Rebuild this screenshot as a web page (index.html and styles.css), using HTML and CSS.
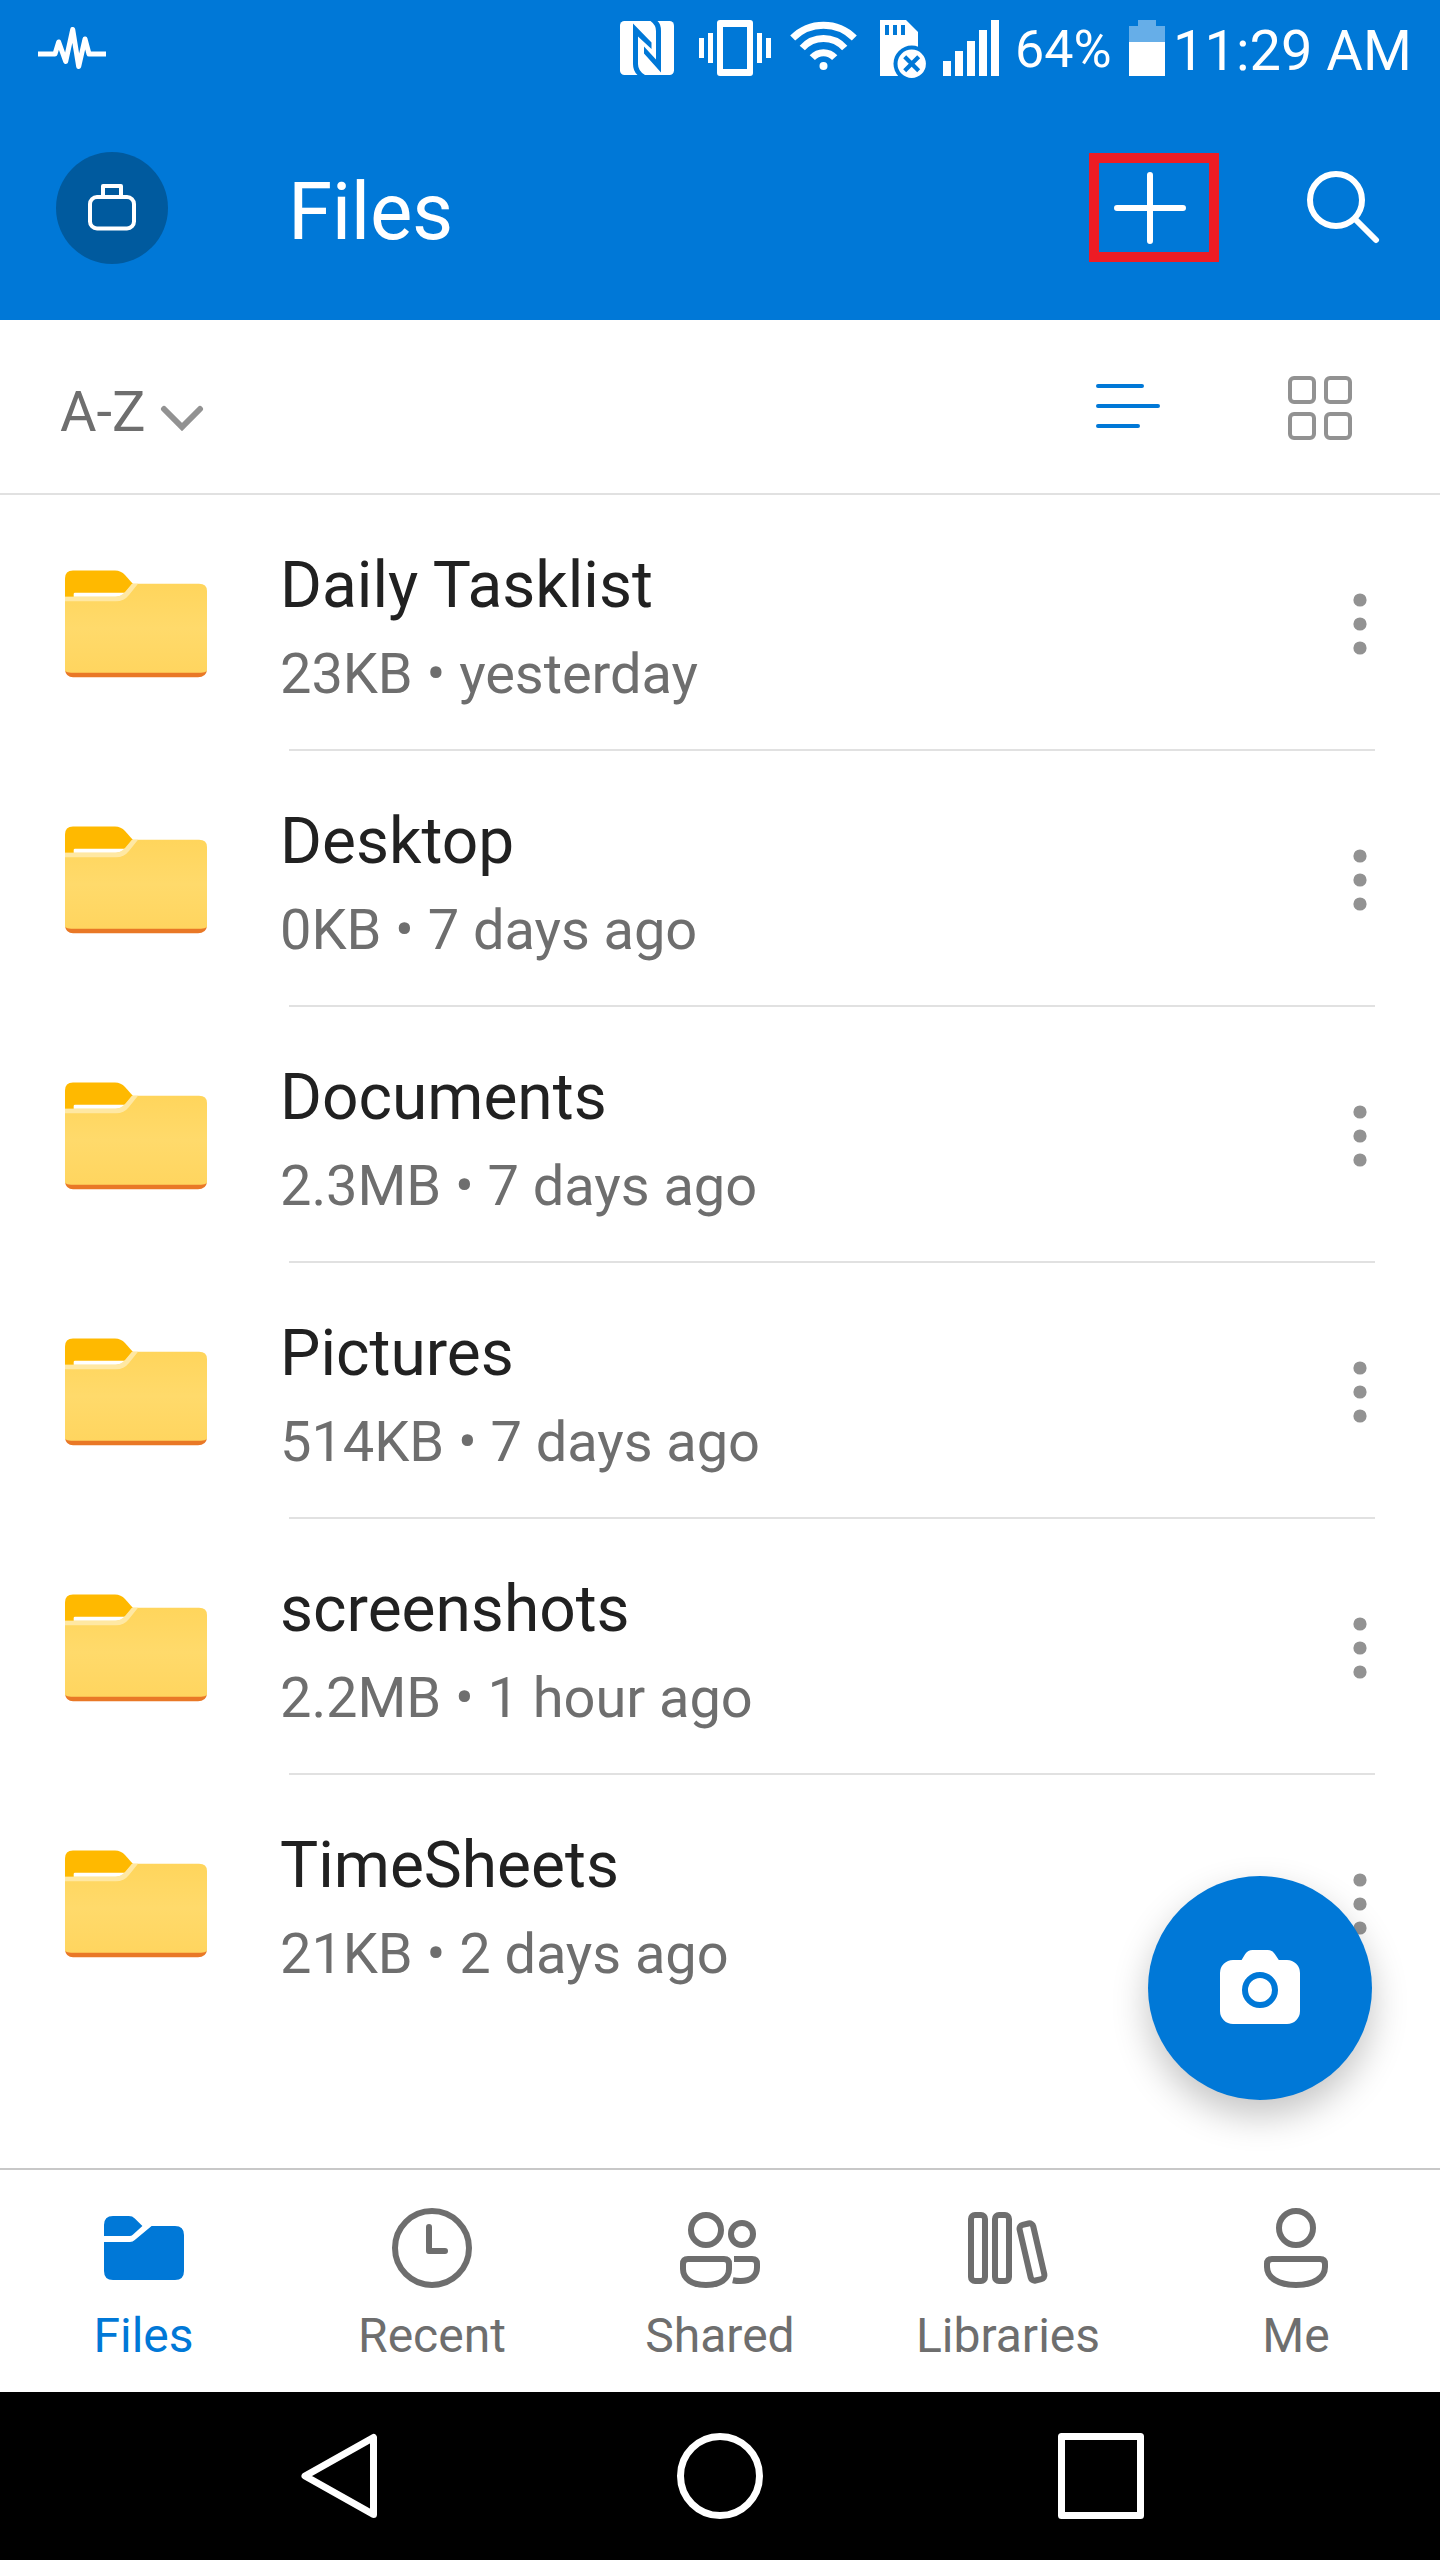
FILE: index.html
```html
<!DOCTYPE html>
<html lang="en">
<head>
    <meta charset="UTF-8">
    <meta name="viewport" content="width=device-width, initial-scale=1.0">
    <title>Files</title>
    <link rel="stylesheet" href="styles.css">
</head>
<body>

<!-- Shared icons -->
<svg class="sprite" width="0" height="0">
    <defs>
        <linearGradient id="folder-fill" x1="0" y1="0" x2="0" y2="1">
            <stop offset="0" stop-color="#ffd55c"/>
            <stop offset="0.5" stop-color="#ffda6b"/>
            <stop offset="1" stop-color="#ffd55f"/>
        </linearGradient>
    </defs>
    <symbol id="folder" viewBox="0 0 142 108">
        <path fill="#ffb900" d="M0 30V8.500Q0 .5 8 .5H50Q56 .5 60 5L68 14L60 30Z"/>
        <path fill="#fff" d="M8.700 28V24Q8.700 22.700 10 22.700H62L54 28Z"/>
        <path fill="#e97826" d="M0 98H142V100Q141 107.300 133 107.300H8Q1 107.300 0 100Z"/>
        <path fill="url(#folder-fill)" d="M0 26.700H51Q57 26.700 61 21.500L67 13.700H134Q142 13.700 142 21V101Q140 102.700 136 102.700H6Q2 102.700 0 101Z"/>
        <path fill="#ffe8a3" d="M0 26.700H50Q56 26.700 60 22L67 13.700H73L64 25Q59 31.300 51 31.300H0Z"/>
    </symbol>
    <symbol id="more" viewBox="0 0 14 62">
        <circle cx="7" cy="7" r="6.600"/>
        <circle cx="7" cy="31" r="6.600"/>
        <circle cx="7" cy="55" r="6.600"/>
    </symbol>
</svg>

<div class="phone">

    <!-- Header -->
    <header class="header">
        <div class="status-bar">
            <svg class="pulse" width="68" height="44" viewBox="0 0 68 44">
                <path d="M0 27H17L20.700 15L27.700 34.500L34.700 2.500L40.700 39.500L47 12L51 27H68"/>
            </svg>
            <svg class="nfc" width="54" height="54" viewBox="0 0 54 54">
                <rect width="54" height="54" rx="4.500" fill="#fff"/>
                <path fill="#0078d7" d="M13 2.500L31.500 21.500V28L18 15.500V43Q18 50 25 54H17.500Q13 50 13 43ZM41 51.500L24 32.500V25.500L36 38.500V10Q36 4 30.500 0H37.500Q41 3 41 10Z"/>
            </svg>
            <svg class="vibrate" width="72" height="56" viewBox="0 0 72 56" fill="#fff">
                <path fill-rule="evenodd" d="M21 0H51Q54 0 54 3V53Q54 56 51 56H21Q18 56 18 53V3Q18 0 21 0ZM24 7V49H48V7Z"/>
                <path d="M0 18H5V38H0ZM9 13H14V43H9ZM58 13H63V43H58ZM67 18H72V38H67Z"/>
            </svg>
            <svg class="wifi" width="67" height="56" viewBox="0 0 67 56">
                <path d="M2.700 18A43.400 43.400 0 0 1 64.300 18M12.300 28A28.300 28.300 0 0 1 54.700 28M22.300 37.700A15 15 0 0 1 44.700 37.700"/>
                <circle cx="33.500" cy="46" r="4"/>
            </svg>
            <svg class="sd-card" width="46" height="58" viewBox="0 0 46 58">
                <path fill="#fff" d="M0 0H26L38 12V56H0Z"/>
                <path fill="#0078d7" d="M5 5H9V15H5ZM13 5H17V15H13ZM21 5H25V15H21Z"/>
                <circle cx="31.700" cy="43.800" r="18.200" fill="#0078d7"/>
                <circle cx="31.700" cy="43.800" r="14.200" fill="#fff"/>
                <path stroke="#0078d7" stroke-width="4.200" d="M24.700 36.800L38.700 50.800M38.700 36.800L24.700 50.800"/>
            </svg>
            <svg class="signal" width="56" height="56" viewBox="0 0 56 56" fill="#fff">
                <path d="M0 41H8V56H0ZM12 31H20V56H12ZM24 21H32V56H24ZM36 10H44V56H36ZM48 0H56V56H48Z"/>
            </svg>
            <span class="battery-level">64%</span>
            <svg class="battery" width="36" height="56" viewBox="0 0 36 56">
                <path fill="#66aee8" d="M9 0H27V6H36V22H0V6H9Z"/>
                <path fill="#fff" d="M0 22H36V56H0Z"/>
            </svg>
            <span class="time">11:29 AM</span>
        </div>

        <div class="app-bar">
            <div class="account">
                <svg width="48" height="48" viewBox="0 0 48 48">
                    <rect x="2" y="13" width="44" height="31.500" rx="7"/>
                    <path d="M15 13V2H33V13"/>
                </svg>
            </div>
            <h1 class="title">Files</h1>
            <button class="add-button">
                <svg width="72" height="72" viewBox="0 0 72 72">
                    <path d="M36 3V69M3 36H69"/>
                </svg>
            </button>
            <svg class="search" width="74" height="74" viewBox="0 0 74 74">
                <circle cx="30" cy="30" r="26"/>
                <path d="M49 49L70 70"/>
            </svg>
        </div>
    </header>

    <!-- Sort and view options -->
    <div class="toolbar">
        <span class="sort">A-Z</span>
        <svg class="chevron" width="44" height="26" viewBox="0 0 44 26">
            <path d="M4 4L22 22L40 4"/>
        </svg>
        <svg class="list-view" width="64" height="44" viewBox="0 0 64 44">
            <path d="M2 2H46M2 22H62M2 42H42"/>
        </svg>
        <svg class="grid-view" width="64" height="64" viewBox="0 0 64 64">
            <rect x="2" y="2" width="24" height="24" rx="4"/>
            <rect x="38" y="2" width="24" height="24" rx="4"/>
            <rect x="2" y="38" width="24" height="24" rx="4"/>
            <rect x="38" y="38" width="24" height="24" rx="4"/>
        </svg>
    </div>

    <!-- File list -->
    <main class="file-list">
        <div class="file">
            <svg class="folder"><use href="#folder"/></svg>
            <div class="file-info">
                <div class="file-name">Daily Tasklist</div>
                <div class="file-meta">23KB • yesterday</div>
            </div>
            <svg class="more"><use href="#more"/></svg>
        </div>
        <div class="file">
            <svg class="folder"><use href="#folder"/></svg>
            <div class="file-info">
                <div class="file-name">Desktop</div>
                <div class="file-meta">0KB • 7 days ago</div>
            </div>
            <svg class="more"><use href="#more"/></svg>
        </div>
        <div class="file">
            <svg class="folder"><use href="#folder"/></svg>
            <div class="file-info">
                <div class="file-name">Documents</div>
                <div class="file-meta">2.3MB • 7 days ago</div>
            </div>
            <svg class="more"><use href="#more"/></svg>
        </div>
        <div class="file">
            <svg class="folder"><use href="#folder"/></svg>
            <div class="file-info">
                <div class="file-name">Pictures</div>
                <div class="file-meta">514KB • 7 days ago</div>
            </div>
            <svg class="more"><use href="#more"/></svg>
        </div>
        <div class="file">
            <svg class="folder"><use href="#folder"/></svg>
            <div class="file-info">
                <div class="file-name">screenshots</div>
                <div class="file-meta">2.2MB • 1 hour ago</div>
            </div>
            <svg class="more"><use href="#more"/></svg>
        </div>
        <div class="file">
            <svg class="folder"><use href="#folder"/></svg>
            <div class="file-info">
                <div class="file-name">TimeSheets</div>
                <div class="file-meta">21KB • 2 days ago</div>
            </div>
            <svg class="more"><use href="#more"/></svg>
        </div>

        <button class="camera-button">
            <svg width="96" height="96" viewBox="0 0 24 24">
                <path fill="#fff" d="M7.400 5L8.300 3.500Q9 2.500 10.100 2.500H13.900Q15 2.500 15.700 3.500L16.700 5H18.750A3.250 3.250 0 0 1 22 8.250V17.750A3.250 3.250 0 0 1 18.750 21H5.250A3.250 3.250 0 0 1 2 17.750V8.250A3.250 3.250 0 0 1 5.250 5Z"/>
                <circle cx="12" cy="12.500" r="3.750" fill="none" stroke="#0078d7" stroke-width="1.500"/>
            </svg>
        </button>
    </main>

    <!-- Bottom tabs -->
    <nav class="tabs">
        <a class="tab active">
            <svg viewBox="0 0 24 24">
                <path class="solid" d="M2 9V6.250Q2 4 4.250 4H8.200Q9.100 4 9.700 4.600L11.600 6.500L9.200 8.700Q8.850 9 8.400 9Z"/>
                <path class="solid" d="M2 10.500H8.500Q9.200 10.500 9.700 10L13.900 6.500H19.750Q22 6.500 22 8.750V17.750Q22 20 19.750 20H4.250Q2 20 2 17.750Z"/>
            </svg>
            <span>Files</span>
        </a>
        <a class="tab">
            <svg viewBox="0 0 24 24">
                <circle cx="12" cy="12" r="9.250"/>
                <path d="M11.250 6.750V12.750H15.250"/>
            </svg>
            <span>Recent</span>
        </a>
        <a class="tab">
            <svg class="shared-icon" viewBox="0 0 24 24">
                <circle cx="8.500" cy="7.500" r="3.750"/>
                <circle cx="17.500" cy="8.500" r="2.750"/>
                <path d="M4 14.750H13Q14.250 14.750 14.250 16V17.250C14.250 19.700 12 21.250 8.500 21.250S2.750 19.700 2.750 17.250V16Q2.750 14.750 4 14.750Z"/>
                <path d="M15.500 14.750H20Q21.250 14.750 21.250 16V16.900C21.250 19 19.700 20.250 17.200 20.250Q16.100 20.250 15.200 20.050"/>
            </svg>
            <span>Shared</span>
        </a>
        <a class="tab">
            <svg viewBox="0 0 24 24">
                <rect x="2.750" y="3.750" width="3.500" height="16.500" rx="1"/>
                <rect x="8.750" y="3.750" width="3.500" height="16.500" rx="1"/>
                <rect x="16.250" y="5.850" width="3.500" height="14.300" rx="1" transform="rotate(-13 18 13)"/>
            </svg>
            <span>Libraries</span>
        </a>
        <a class="tab">
            <svg viewBox="0 0 24 24">
                <circle cx="12" cy="7" r="4.250"/>
                <path d="M6 14.750H18Q19.250 14.750 19.250 16V16.750C19.250 19.500 16.300 21.250 12 21.250S4.750 19.500 4.750 16.750V16Q4.750 14.750 6 14.750Z"/>
            </svg>
            <span>Me</span>
        </a>
    </nav>

    <!-- System navigation -->
    <div class="system-bar">
        <svg class="back" width="76" height="88" viewBox="0 0 76 88">
            <path d="M72.500 5.500V82.500L4 44Z"/>
        </svg>
        <svg class="home" width="88" height="88" viewBox="0 0 88 88">
            <circle cx="44" cy="44" r="39.500"/>
        </svg>
        <svg class="recents" width="88" height="88" viewBox="0 0 88 88">
            <rect x="4.500" y="4.500" width="79" height="79"/>
        </svg>
    </div>

</div>

</body>
</html>
```
FILE: styles.css
```css
* {
    box-sizing: border-box;
}

body {
    margin: 0;
    font-family: Roboto, "Liberation Sans", sans-serif;
    background-color: #fff;
}

svg {
    display: block;
    flex-shrink: 0;
}

button {
    border: none;
    padding: 0;
    background: none;
}

.sprite {
    position: absolute;
}

.phone {
    width: 1440px;
    height: 2560px;
    display: flex;
    flex-direction: column;
    overflow: hidden;
}

/* Header */
.header {
    height: 320px;
    background-color: #0078d7;
    color: #fff;
}

.status-bar {
    height: 96px;
    padding: 20px 32px 0 38px;
    display: flex;
    align-items: flex-start;
    white-space: nowrap;
}

.pulse {
    margin-top: 7px;
    margin-right: auto;
    fill: none;
    stroke: #fff;
    stroke-width: 5;
    stroke-linejoin: round;
}

.nfc {
    margin-top: 1px;
    margin-right: 25px;
}

.vibrate {
    margin-right: 19px;
}

.wifi {
    margin-right: 23px;
    fill: none;
    stroke: #fff;
    stroke-width: 7;
}

.wifi circle {
    fill: #fff;
    stroke: none;
}

.sd-card {
    margin-right: 17px;
}

.signal {
    margin-right: 16px;
}

.battery-level {
    width: 98px;
    font-size: 52px;
    line-height: 60px;
}

.battery {
    margin-left: 16px;
    margin-right: 8px;
}

.time {
    width: 235px;
    font-size: 56px;
    line-height: 62px;
}

.app-bar {
    height: 224px;
    padding: 0 60px 0 56px;
    display: flex;
    align-items: center;
}

.account {
    width: 112px;
    height: 112px;
    border-radius: 50%;
    background-color: #005a9e;
    display: flex;
    align-items: center;
    justify-content: center;
}

.account svg {
    fill: none;
    stroke: #fff;
    stroke-width: 4;
    stroke-linejoin: round;
}

.title {
    margin: 7px auto 0 120px;
    font-size: 80px;
    font-weight: 400;
    line-height: 94px;
    letter-spacing: -0.4px;
}

.add-button {
    width: 130px;
    height: 109px;
    padding: 1px 0 0 15px;
    margin-right: 87px;
    margin-bottom: 1px;
    border: 10px solid #ed1c24;
    display: flex;
    align-items: center;
}

.add-button svg,
.search {
    fill: none;
    stroke: #fff;
    stroke-width: 6;
    stroke-linecap: round;
}

.search {
    margin-bottom: 2px;
}

/* Sort and view options */
.toolbar {
    height: 175px;
    padding: 0 88px 0 60px;
    border-bottom: 2px solid #e1e1e1;
    display: flex;
    align-items: center;
}

.toolbar svg {
    fill: none;
    stroke: #929292;
    stroke-width: 4;
    stroke-linecap: round;
}

.sort {
    margin-top: 11px;
    font-size: 56px;
    line-height: 66px;
    color: #6e6e6e;
}

.toolbar .chevron {
    margin: 23px auto 0 14px;
    stroke-width: 6;
}

.toolbar .list-view {
    margin-right: 128px;
    margin-bottom: 1px;
    stroke: #0078d7;
}

.grid-view {
    margin-top: 3px;
}

/* File list */
.file-list {
    flex: 1;
    position: relative;
}

.file {
    height: 256px;
    display: flex;
    align-items: flex-start;
    padding-left: 65px;
    padding-right: 73px;
    background: linear-gradient(#e1e1e1, #e1e1e1) no-repeat 289px 100% / 1086px 2px;
}

.file:last-of-type {
    background: none;
}

.folder {
    width: 142px;
    height: 108px;
    margin-top: 75px;
}

.file-info {
    flex: 1;
    margin: 51px 0 0 73px;
}

.file-name {
    font-size: 64px;
    line-height: 80px;
    color: #212121;
}

.file-meta {
    margin-top: 8px;
    font-size: 56px;
    line-height: 80px;
    letter-spacing: -0.07px;
    color: #6e6e6e;
}

.more {
    width: 14px;
    height: 62px;
    margin-top: 98px;
    fill: #929292;
}

.camera-button {
    position: absolute;
    right: 68px;
    bottom: 68px;
    width: 224px;
    height: 224px;
    border-radius: 50%;
    background-color: #0078d7;
    box-shadow: 0 16px 36px rgba(0, 0, 0, 0.23);
    display: flex;
    align-items: center;
    justify-content: center;
}

/* Bottom tabs */
.tabs {
    height: 224px;
    padding-top: 30px;
    border-top: 2px solid #c8c8c8;
    display: flex;
}

.tab {
    flex: 1;
    display: flex;
    flex-direction: column;
    align-items: center;
    font-size: 48px;
    line-height: 56px;
    color: #6e6e6e;
}

.tab svg {
    width: 96px;
    height: 96px;
    margin-bottom: 12px;
    fill: none;
    stroke: currentColor;
    stroke-width: 1.5;
    stroke-linecap: round;
    stroke-linejoin: round;
}

.tab .shared-icon {
    stroke-linecap: butt;
}

.tab .solid {
    fill: currentColor;
    stroke: none;
}

.tab.active {
    color: #0078d7;
}

.tab.active span {
    margin-right: 1px;
}

/* System navigation */
.system-bar {
    height: 168px;
    padding: 0 295px 0 301px;
    background-color: #000;
    display: flex;
    align-items: center;
    justify-content: space-between;
}

.system-bar svg {
    fill: none;
    stroke: #fff;
    stroke-width: 7;
    stroke-linejoin: round;
}

.back {
    margin-right: 6px;
}
```
